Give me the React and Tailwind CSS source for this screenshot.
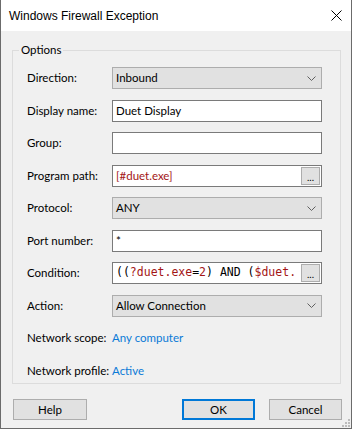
import React from "react";

const red = "text-[#a31515]";

function Chevron() {
  return (
    <svg width="9" height="5" viewBox="0 0 9 5" className="shrink-0">
      <path d="M0.5 0.5 L4.5 4.5 L8.5 0.5" fill="none" stroke="#606060" strokeWidth="1" />
    </svg>
  );
}

function Dropdown({ value }) {
  return (
    <div className="flex h-[22px] items-center justify-between border border-[#adadad] bg-[#e1e1e1] pl-[3px] pr-[5px]">
      <span>{value}</span>
      <Chevron />
    </div>
  );
}

function TextBox({ children, browse = false, mono = false }) {
  return (
    <div className="flex h-[22px] items-stretch border border-[#7a7a7a] bg-white">
      <div
        className={`flex min-w-0 flex-1 items-center overflow-hidden whitespace-nowrap pl-[3px] ${
          mono ? "font-['DejaVu_Sans_Mono','Liberation_Mono',monospace] text-[11.5px]" : ""
        }`}
      >
        {children}
      </div>
      {browse ? (
        <div className="m-[1px] flex w-[19px] items-end justify-center border border-[#adadad] bg-[#e1e1e1] pb-[2px] text-[10px] leading-none">
          ...
        </div>
      ) : null}
    </div>
  );
}

function Label({ children }) {
  return <div className="flex h-[22px] items-center">{children}</div>;
}

function Link({ children }) {
  return <div className="flex h-[22px] items-center text-[#0a7ad7]">{children}</div>;
}

function Button({ children, primary = false }) {
  return (
    <div
      className={`flex h-[21px] items-center justify-center bg-[#e1e1e1] ${
        primary ? "w-[73px] border-2 border-[#0078d7]" : "border border-[#adadad]"
      }`}
    >
      {children}
    </div>
  );
}

export default function App() {
  return (
    <div className="relative flex h-[429px] w-[352px] flex-col border-x border-b border-[#6b6b6b] bg-[#f0f0f0] font-['Lato','Noto_Sans',sans-serif] text-[11.5px] text-black">
      <div className="flex h-[31px] shrink-0 items-center justify-between bg-white pl-[8px] pr-[9px]">
        <span className="font-['Liberation_Sans',sans-serif] text-[12px]">Windows Firewall Exception</span>
        <svg width="11" height="11" viewBox="0 0 11 11">
          <path d="M0.5 0.5 L10.5 10.5 M10.5 0.5 L0.5 10.5" stroke="#000" strokeWidth="1" />
        </svg>
      </div>

      <fieldset className="ml-[11px] mr-[10px] mt-[11px] border border-[#dcdcdc] pb-[1.5px] pl-[14px] pr-[18px]">
        <legend className="-ml-[8px] px-[2px] leading-[16px]">Options</legend>
        <div className="mt-[9px] grid grid-cols-[85px_210px] gap-y-[10.5px]">
          <Label>Direction:</Label>
          <Dropdown value="Inbound" />

          <Label>Display name:</Label>
          <TextBox>Duet Display</TextBox>

          <Label>Group:</Label>
          <TextBox />

          <Label>Program path:</Label>
          <TextBox browse>
            <span className={red}>[#duet.exe]</span>
          </TextBox>

          <Label>Protocol:</Label>
          <Dropdown value="ANY" />

          <Label>Port number:</Label>
          <TextBox>*</TextBox>

          <Label>Condition:</Label>
          <TextBox browse mono>
            <span>((</span>
            <span className={red}>?duet.exe</span>
            <span>=</span>
            <span className={red}>2</span>
            <span>) AND (</span>
            <span className={red}>$duet.</span>
          </TextBox>

          <Label>Action:</Label>
          <Dropdown value="Allow Connection" />

          <Label>Network scope:</Label>
          <Link>Any computer</Link>

          <Label>Network profile:</Label>
          <Link>Active</Link>
        </div>
      </fieldset>

      <div className="mt-[15px] flex items-start justify-between pl-[12px] pr-[9px]">
        <div className="w-[74px]">
          <Button>Help</Button>
        </div>
        <div className="flex gap-[14px]">
          <Button primary>OK</Button>
          <div className="w-[73px]">
            <Button>Cancel</Button>
          </div>
        </div>
      </div>

      <svg width="9" height="9" viewBox="0 0 9 9" className="absolute bottom-[1px] right-[1px]">
        <rect x="7" y="1" width="2" height="2" fill="#bcbcbc" />
        <rect x="4" y="4" width="2" height="2" fill="#bcbcbc" />
        <rect x="7" y="4" width="2" height="2" fill="#bcbcbc" />
        <rect x="1" y="7" width="2" height="2" fill="#bcbcbc" />
        <rect x="4" y="7" width="2" height="2" fill="#bcbcbc" />
        <rect x="7" y="7" width="2" height="2" fill="#bcbcbc" />
      </svg>
    </div>
  );
}
